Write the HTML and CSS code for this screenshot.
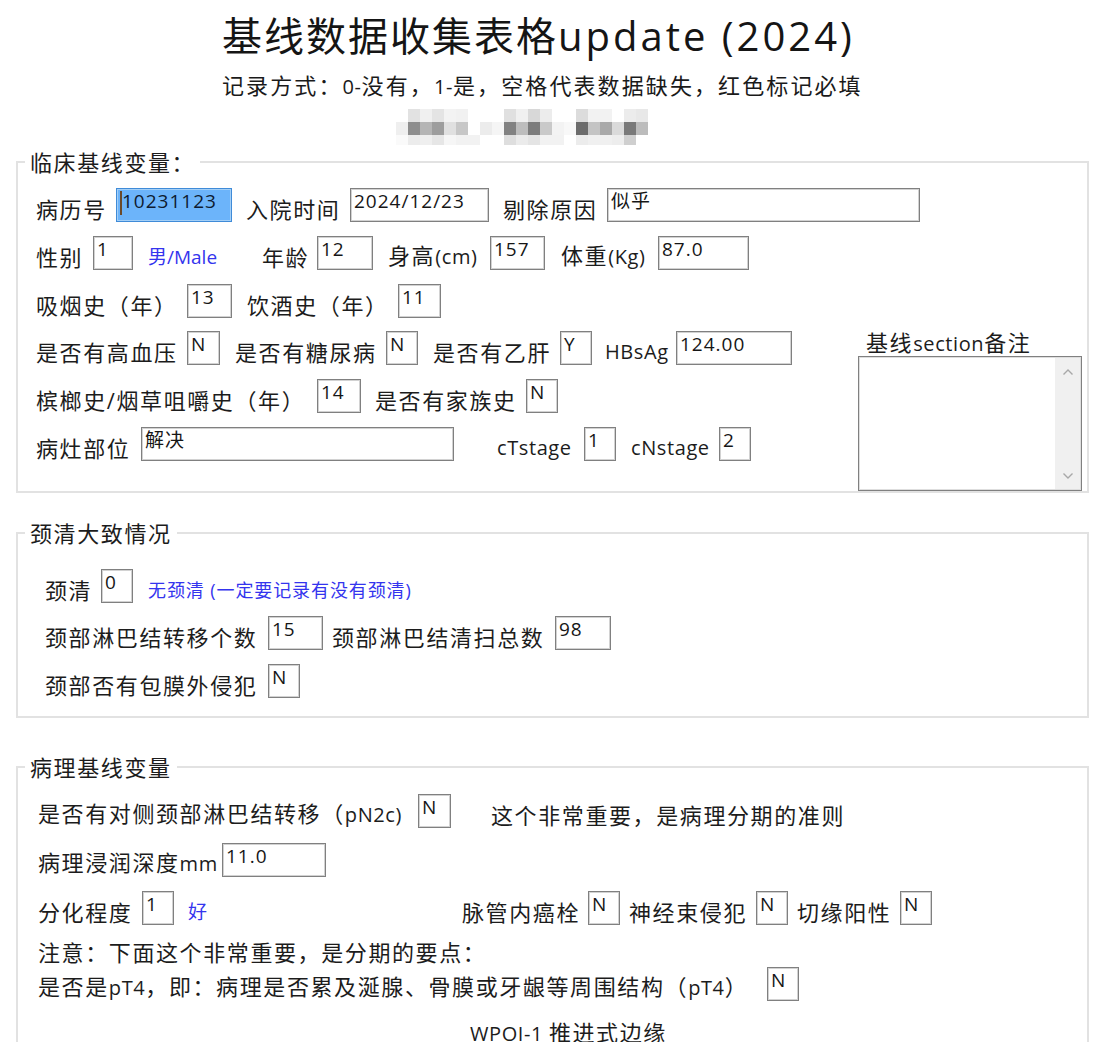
FILE: index.html
```html
<!DOCTYPE html>
<html lang="zh-CN">
<head>
<meta charset="utf-8">
<title>基线数据收集表格update (2024)</title>
<link rel="stylesheet" href="styles.css">
</head>
<body>
<div class="page">
  <header class="head">
    <h1 class="title">基线数据收集表格<span class="t-en">update (2024)</span></h1>
    <p class="subtitle">记录方式：<span class="en">0-</span>没有，<span class="en">1-</span>是，空格代表数据缺失，红色标记必填</p>
  </header>
  <div class="redacted" aria-hidden="true">
    <div class="rd rd-top"></div>
    <div class="rd rd-mid"></div>
    <div class="rd rd-bot"></div>
  </div>

  <fieldset class="fs fs1">
    <legend class="legend">临床基线变量：</legend>
    <div class="content c1">
      <div class="stack s-top">
        <div class="row t11">
          <span class="lbl">病历号</span>
          <span class="box w116 selected"><span class="caret"></span>10231123</span>
          <span class="lbl">入院时间</span>
          <span class="box w139">2024/12/23</span>
          <span class="lbl">剔除原因</span>
          <span class="box w313">似乎</span>
        </div>
        <div class="row t12">
          <span class="lbl">性别</span>
          <span class="box w40">1</span>
          <span class="lbl note">男/Male</span>
          <span class="lbl">年龄</span>
          <span class="box w56">12</span>
          <span class="lbl">身高<span class="en">(cm)</span></span>
          <span class="box w55">157</span>
          <span class="lbl">体重<span class="en">(Kg)</span></span>
          <span class="box w91">87.0</span>
        </div>
        <div class="row t13">
          <span class="lbl">吸烟史（年）</span>
          <span class="box w45">13</span>
          <span class="lbl">饮酒史（年）</span>
          <span class="box w43">11</span>
        </div>
      </div>
      <div class="split">
        <div class="stack s-left">
          <div class="row t14">
            <span class="lbl">是否有高血压</span>
            <span class="box w33">N</span>
            <span class="lbl">是否有糖尿病</span>
            <span class="box w32">N</span>
            <span class="lbl">是否有乙肝</span>
            <span class="box w32">Y</span>
            <span class="lbl"><span class="en">HBsAg</span></span>
            <span class="box w116">124.00</span>
          </div>
          <div class="row t15">
            <span class="lbl">槟榔史/烟草咀嚼史（年）</span>
            <span class="box w44">14</span>
            <span class="lbl">是否有家族史</span>
            <span class="box w32">N</span>
          </div>
          <div class="row t16">
            <span class="lbl">病灶部位</span>
            <span class="box w313">解决</span>
            <span class="lbl"><span class="en">cTstage</span></span>
            <span class="box w32">1</span>
            <span class="lbl"><span class="en">cNstage</span></span>
            <span class="box w32">2</span>
          </div>
        </div>
        <div class="notes">
          <div class="lbl notes-lbl">基线<span class="en">section</span>备注</div>
          <div class="memo">
            <div class="scroll">
              <svg class="chev" width="12" height="8" viewBox="0 0 12 8"><polyline points="1.5,6.5 6,2 10.5,6.5" fill="none" stroke="#a8a8a8" stroke-width="1.4"/></svg>
              <svg class="chev" width="12" height="8" viewBox="0 0 12 8"><polyline points="1.5,1.5 6,6 10.5,1.5" fill="none" stroke="#a8a8a8" stroke-width="1.4"/></svg>
            </div>
          </div>
        </div>
      </div>
    </div>
  </fieldset>

  <fieldset class="fs fs2">
    <legend class="legend">颈清大致情况</legend>
    <div class="content c2">
      <div class="row t21">
        <span class="lbl">颈清</span>
        <span class="box w32">0</span>
        <span class="lbl note small">无颈清 (一定要记录有没有颈清)</span>
      </div>
      <div class="row t22">
        <span class="lbl">颈部淋巴结转移个数</span>
        <span class="box w55">15</span>
        <span class="lbl">颈部淋巴结清扫总数</span>
        <span class="box w56">98</span>
      </div>
      <div class="row t23">
        <span class="lbl">颈部否有包膜外侵犯</span>
        <span class="box w32">N</span>
      </div>
    </div>
  </fieldset>

  <fieldset class="fs fs3">
    <legend class="legend">病理基线变量</legend>
    <div class="content c3">
      <div class="row t31">
        <span class="lbl">是否有对侧颈部淋巴结转移（<span class="en">pN2c)</span></span>
        <span class="box w33">N</span>
        <span class="lbl">这个非常重要，是病理分期的准则</span>
      </div>
      <div class="row t32">
        <span class="lbl">病理浸润深度<span class="en">mm</span></span>
        <span class="box w104">11.0</span>
      </div>
      <div class="row t33">
        <span class="lbl">分化程度</span>
        <span class="box w32">1</span>
        <span class="lbl note">好</span>
        <span class="lbl">脉管内癌栓</span>
        <span class="box w32">N</span>
        <span class="lbl">神经束侵犯</span>
        <span class="box w32">N</span>
        <span class="lbl">切缘阳性</span>
        <span class="box w32">N</span>
      </div>
      <div class="line l34">
        <span class="lbl">注意：下面这个非常重要，是分期的要点：</span>
      </div>
      <div class="row t35">
        <span class="lbl">是否是<span class="en">pT4</span>，即：病理是否累及涎腺、骨膜或牙龈等周围结构（<span class="en">pT4</span>）</span>
        <span class="box w32">N</span>
      </div>
      <div class="line l36">
        <span class="lbl"><span class="en">WPOI-1 </span>推进式边缘</span>
      </div>
    </div>
  </fieldset>
</div>
</body>
</html>
```

FILE: styles.css
```css
* { box-sizing: border-box; }

html, body {
  margin: 0;
  padding: 0;
  background: #ffffff;
}

body {
  width: 1105px;
  font-family: "Open Sans", "Noto Sans CJK SC", sans-serif;
  color: #1c1c1c;
}

.page {
  padding-top: 12px;
  padding-bottom: 40px;
}

/* ---------- header ---------- */
.head {
  padding-left: 222px;
}

.title {
  margin: 0;
  font-size: 40px;
  line-height: 48px;
  font-weight: 400;
  letter-spacing: 2px;
  color: #151515;
  white-space: nowrap;
}

.t-en {
  letter-spacing: 3px;
}

.subtitle {
  margin: 10px 0 0;
  font-size: 22px;
  line-height: 30px;
  letter-spacing: 2.1px;
  color: #1a1a1a;
  white-space: nowrap;
}

.subtitle .en {
  font-size: 20px;
}

/* pixelated, blurred redaction strip */
.redacted {
  width: 252px;
  margin: 7px 0 0 396px;
  filter: blur(0.7px);
}

.rd {
  width: 252px;
}

.rd-top {
  height: 13px;
  background: linear-gradient(to right,
    #ffffff 0 12px, #e2e2e2 12px 24px, #f0f0f0 24px 36px, #e4e4e4 36px 48px,
    #f3f3f3 48px 60px, #f1f1f1 60px 72px, #ffffff 72px 108px, #e0e0e0 108px 120px,
    #f0f0f0 120px 132px, #d8d8d8 132px 144px, #ececec 144px 156px, #ffffff 156px 180px,
    #dcdcdc 180px 192px, #f2f2f2 192px 216px, #ffffff 216px 228px, #ececec 228px 240px,
    #e8e8e8 240px 252px);
}

.rd-mid {
  height: 13px;
  background: linear-gradient(to right,
    #efefef 0 12px, #8e8e8e 12px 24px, #b5b5b5 24px 36px, #9d9d9d 36px 48px,
    #e0e0e0 48px 60px, #c7c7c7 60px 72px, #ffffff 72px 84px, #ececec 84px 96px,
    #f5f5f5 96px 108px, #828282 108px 120px, #bdbdbd 120px 132px, #7c7c7c 132px 144px,
    #c9c9c9 144px 156px, #f3f3f3 156px 168px, #f8f8f8 168px 180px, #6c6c6c 180px 192px,
    #c4c4c4 192px 204px, #a9a9a9 204px 216px, #dadada 216px 228px, #797979 228px 240px,
    #bcbcbc 240px 252px);
}

.rd-bot {
  height: 10px;
  background: linear-gradient(to right,
    #fafafa 0 12px, #ececec 12px 24px, #efefef 24px 36px, #e6e6e6 36px 48px,
    #f6f6f6 48px 60px, #f2f2f2 60px 84px, #ffffff 84px 108px, #dedede 108px 120px,
    #ebebeb 120px 132px, #e4e4e4 132px 144px, #f2f2f2 144px 168px, #ffffff 168px 180px,
    #ececec 180px 192px, #f0f0f0 192px 216px, #ededed 216px 228px, #cfcfcf 228px 240px,
    #ffffff 240px 252px);
}

/* ---------- fieldsets ---------- */
.fs {
  margin: 0 16px;
  padding: 0;
  border: 2px solid #e2e2e2;
  min-inline-size: 0;
}

.fs1 { margin-top: 5px; }
.fs2 { margin-top: 28px; }
.fs3 { margin-top: 37px; }

.legend {
  margin-left: 7px;
  padding: 0 5px;
  font-size: 22px;
  line-height: 24px;
  letter-spacing: 1.6px;
  color: #1c1c1c;
  white-space: nowrap;
}

.content {
  display: flex;
  flex-direction: column;
}

.c1 {
  padding: 14px 5px 0 18px;
}

.c2 {
  padding: 24px 0 18px 27px;
  gap: 13px;
}

.c3 {
  padding: 15px 0 20px 20px;
}

.stack {
  display: flex;
  flex-direction: column;
  gap: 14px;
}

.split {
  display: flex;
  margin-top: 13px;
}

.s-left {
  flex: 1;
}

/* ---------- rows ---------- */
.row {
  display: grid;
  align-items: end;
  justify-items: start;
  height: 34px;
}

.line {
  height: 24px;
}

.t11 { grid-template-columns: 80px 130px 104px 153px 104px auto; }
.t12 { grid-template-columns: 57px 55px 114px 55px 71px 102px 71px 97px auto; }
.t13 { grid-template-columns: 151px 60px 151px auto; }
.t14 { grid-template-columns: 151px 48px 151px 47px 127px 45px 71px auto; }
.t15 { grid-template-columns: 281px 58px 151px auto; }
.t16 { grid-template-columns: 105px 356px 87px 47px 88px auto; }

.t21 { grid-template-columns: 56px 47px auto; }
.t22 { grid-template-columns: 223px 64px 223px auto; }
.t23 { grid-template-columns: 223px auto; margin-top: 1px; }

.t31 { grid-template-columns: 380px 73px auto; }
.t32 { grid-template-columns: 184px auto; margin-top: 15px; }
.t33 { grid-template-columns: 104px 46px 274px 126px 41px 127px 41px 103px auto; margin-top: 14px; }
.l34 { margin-top: 15px; }
.t35 { grid-template-columns: 729px auto; margin-top: 3px; }
.l36 { margin-top: 19px; padding-left: 432px; }

.lbl {
  display: block;
  font-size: 22px;
  line-height: 24px;
  letter-spacing: 1.6px;
  white-space: nowrap;
  color: #1c1c1c;
  padding-bottom: 1px;
}

.en {
  font-size: 20px;
  letter-spacing: 0.6px;
}

.note {
  font-size: 19px;
  letter-spacing: 0;
  color: #3434ee;
}

.note.small {
  font-size: 18px;
  letter-spacing: 0.9px;
}

/* ---------- input boxes ---------- */
.box {
  display: block;
  height: 34px;
  padding: 1px 3px 0;
  border: 1px solid #808080;
  box-shadow: inset 0 0 0 1px #d2d2d2;
  background: #ffffff;
  font-size: 19px;
  line-height: 22px;
  letter-spacing: 1px;
  color: #161616;
  white-space: nowrap;
  overflow: hidden;
}

.box.selected {
  background: #6cb4fa;
  border-color: #3f8bd8;
  box-shadow: inset 0 0 0 1px #a3cff7;
  color: #0e1b30;
}

.caret {
  display: inline-block;
  width: 2px;
  height: 24px;
  margin-top: 1px;
  background: #6b4a2a;
  vertical-align: top;
}

.w32 { width: 32px; }
.w33 { width: 33px; }
.w40 { width: 40px; }
.w43 { width: 43px; }
.w44 { width: 44px; }
.w45 { width: 45px; }
.w55 { width: 55px; }
.w56 { width: 56px; }
.w91 { width: 91px; }
.w104 { width: 104px; }
.w116 { width: 116px; }
.w139 { width: 139px; }
.w313 { width: 313px; }

/* ---------- notes memo ---------- */
.notes {
  width: 224px;
  display: flex;
  flex-direction: column;
}

.notes-lbl {
  height: 25px;
  padding-left: 8px;
  line-height: 22px;
}

.memo {
  height: 135px;
  border: 1px solid #808080;
  box-shadow: inset 0 0 0 1px #dedede;
  background: #ffffff;
  padding: 1px;
  display: flex;
  justify-content: flex-end;
}

.scroll {
  width: 25px;
  background: #f0f0f0;
  display: flex;
  flex-direction: column;
  justify-content: space-between;
  align-items: center;
  padding: 10px 0 9px;
}

.chev {
  display: block;
}
```
